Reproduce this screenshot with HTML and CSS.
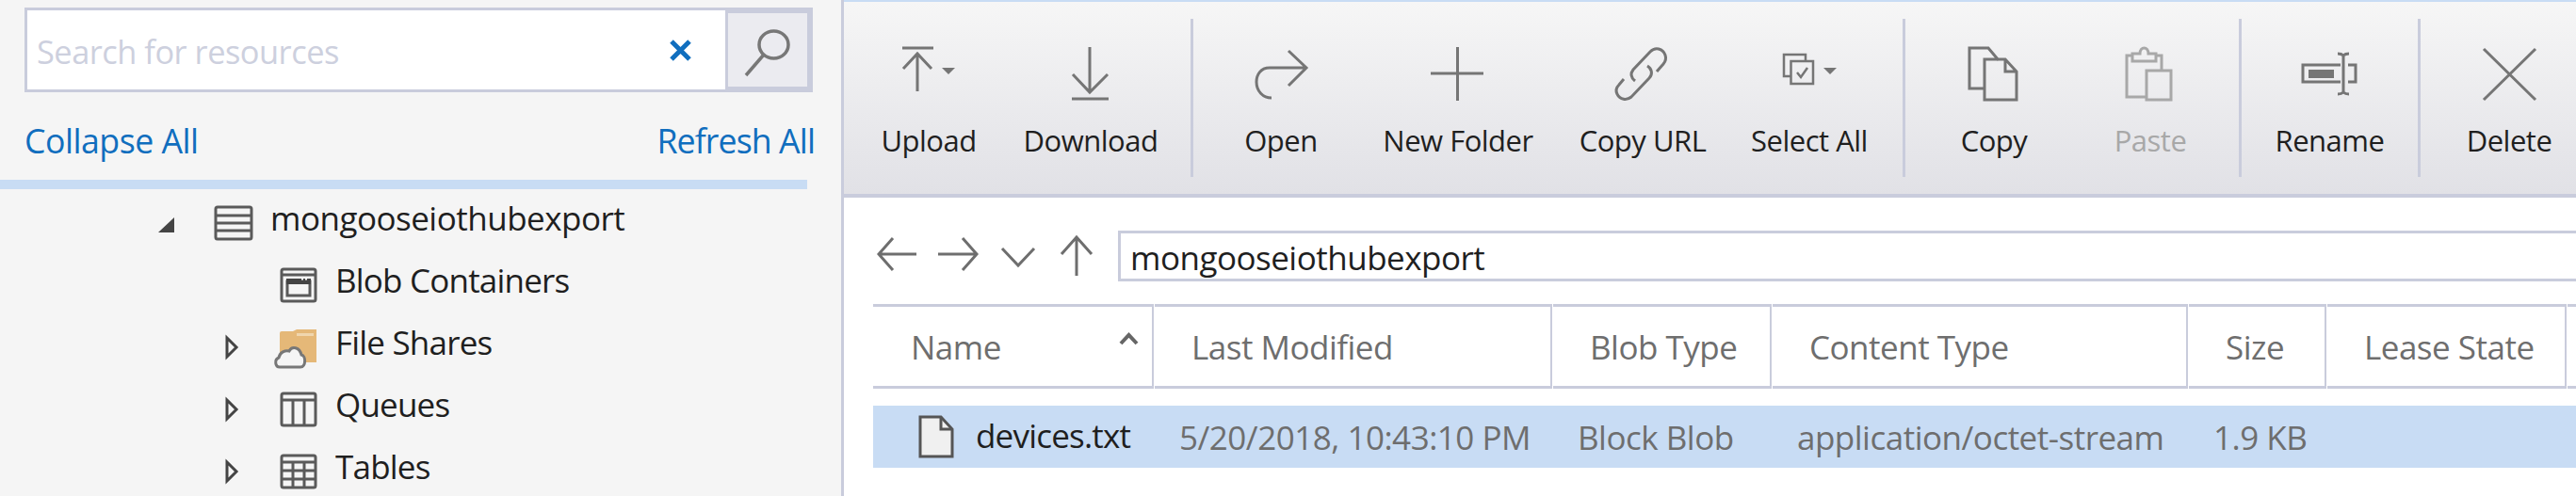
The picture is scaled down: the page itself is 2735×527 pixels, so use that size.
FILE: index.html
```html
<!DOCTYPE html>
<html lang="en">
<head>
    <meta charset="UTF-8">
    <title>Storage Explorer</title>
    <link rel="stylesheet" href="styles.css">
</head>
<body>
<div class="app">
    <div class="sidePanel">
        <div class="searchBox">
            <div class="searchInput">
                <span class="searchPlaceholder">Search for resources</span>
                <svg class="searchClear" width="25" height="23" viewBox="0 0 25 23"><path d="M3 2 22 21M22 2 3 21"/></svg>
            </div>
            <div class="searchButton">
                <svg class="searchGlass" width="84" height="78" viewBox="0 0 84 78"><ellipse cx="48.5" cy="33.5" rx="15.5" ry="14.5"/><path d="M38 44 19 66"/></svg>
            </div>
        </div>
        <div class="linkRow">
            <span>Collapse All</span>
            <span class="linkRefresh">Refresh All</span>
        </div>
        <div class="treeBar"></div>
        <div class="treeRow">
            <svg class="caretSlot" width="59" height="18" viewBox="0 0 59 18"><path class="caretOpen" d="M17 1V17H0Z"/></svg>
            <svg class="treeIcon" width="42" height="38" viewBox="0 0 42 38"><rect class="iconDark" x="2" y="2" width="38" height="34" rx="2"/><path class="iconDark" d="M2 11H40M2 19H40M2 27H40"/></svg>
            <span class="treeLabel">mongooseiothubexport</span>
        </div>
        <div class="treeRow treeChild">
            <span class="caretSlotChild"></span>
            <svg class="treeIcon" width="42" height="38" viewBox="0 0 42 38"><rect class="iconDark" x="2" y="2" width="36" height="34" rx="2"/><path class="iconDark" d="M2 8H38"/><rect class="iconDark" x="8" y="15" width="24" height="15"/><path class="iconFill" d="M7 12H23V14H25V12H27V14H29V12H33V18H7Z"/></svg>
            <span class="treeLabel">Blob Containers</span>
        </div>
        <div class="treeRow treeChild">
            <svg class="caretSlotChild" width="58" height="24" viewBox="0 0 58 24"><path class="caretClosed" d="M2 2 12 12 2 22Z"/></svg>
            <svg class="treeIcon" width="42" height="38" viewBox="0 0 42 38"><path class="folderBack" d="M0 4 Q0 2 2 2H14L18 0H39V35H0Z"/><path class="folderTab" d="M18 4H36V7H18Z"/><path class="cloud" d="M0 40C-5 40 -6 32 -1 30C0 24 6 22 10 23C13 17 21 19 23 27C28 28 28 40 22 40Z"/></svg>
            <span class="treeLabel">File Shares</span>
        </div>
        <div class="treeRow treeChild">
            <svg class="caretSlotChild" width="58" height="24" viewBox="0 0 58 24"><path class="caretClosed" d="M2 2 12 12 2 22Z"/></svg>
            <svg class="treeIcon" width="42" height="38" viewBox="0 0 42 38"><rect class="iconDark" x="2" y="2" width="36" height="34" rx="2"/><path class="iconDark" d="M2 9H38M14 9V36M26 9V36"/></svg>
            <span class="treeLabel">Queues</span>
        </div>
        <div class="treeRow treeChild">
            <svg class="caretSlotChild" width="58" height="24" viewBox="0 0 58 24"><path class="caretClosed" d="M2 2 12 12 2 22Z"/></svg>
            <svg class="treeIcon" width="42" height="38" viewBox="0 0 42 38"><rect class="iconDark" x="2" y="2" width="36" height="34" rx="2"/><path class="iconDark" d="M2 9H38M2 18H38M2 27H38M14 9V36M26 9V36"/></svg>
            <span class="treeLabel">Tables</span>
        </div>
    </div>

    <div class="mainPanel">
        <div class="toolbar">
            <div class="toolItem">
                <svg class="toolIcon" width="64" height="60" viewBox="0 0 64 60"><path d="M4 2H37M20 48V9M5 24 20 8 35 24"/><path class="toolSolid" d="M46 23H60L53 30Z"/></svg>
                <span class="toolLabel">Upload</span>
            </div>
            <div class="toolItem">
                <svg class="toolIcon" width="64" height="60" viewBox="0 0 64 60"><path d="M31 1V49M13 30 31 49 50 30M12 56H51"/></svg>
                <span class="toolLabel">Download</span>
            </div>
            <div class="toolSep"></div>
            <div class="toolItem">
                <svg class="toolIcon" width="64" height="60" viewBox="0 0 64 60"><path d="M40 5 59 23 40 42M59 23H20C10 23 6 31 6 38C6 48 13 55 22 55"/></svg>
                <span class="toolLabel">Open</span>
            </div>
            <div class="toolItem">
                <svg class="toolIcon" width="64" height="60" viewBox="0 0 64 60"><path d="M3 29H59M31.5 1V58"/></svg>
                <span class="toolLabel">New Folder</span>
            </div>
            <div class="toolItem">
                <svg class="toolIcon" width="64" height="60" viewBox="0 0 64 60"><path d="M47 27 54 19C59 13 56 5 49 3C45 2 42 4 40 6L22 25C19 29 19 33 24 37M37 21C42 24 43 30 39 34L20 54C15 58 8 57 5 51C3 47 5 43 7 41L12 35"/></svg>
                <span class="toolLabel">Copy URL</span>
            </div>
            <div class="toolItem">
                <svg class="toolIcon" width="64" height="60" viewBox="0 0 64 60"><path class="thin" d="M12 32H5V9H28V16M12.5 16H36V40H12.5ZM19 28 23 33 30 23"/><path class="toolSolid" d="M47 23H61L54 30Z"/></svg>
                <span class="toolLabel">Select All</span>
            </div>
            <div class="toolSep"></div>
            <div class="toolItem">
                <svg class="toolIcon" width="64" height="60" viewBox="0 0 64 60"><path d="M22 45H6V2H26L37 15M22 14H44L56 27V57H22ZM44 14V27H56"/></svg>
                <span class="toolLabel">Copy</span>
            </div>
            <div class="toolItem toolDisabled">
                <svg class="toolIcon" width="64" height="60" viewBox="0 0 64 60"><path d="M28 54H7V10H13M38 10H44V26M13 16H38V8H30C30 0 21 0 21 8H13ZM28 26H54V57H28Z"/></svg>
                <span class="toolLabel">Paste</span>
            </div>
            <div class="toolSep"></div>
            <div class="toolItem">
                <svg class="toolIcon" width="64" height="60" viewBox="0 0 64 60"><path d="M43 20H3V38H43M46 10V49M40 8C43 8 45 9 46 10C47 9 49 8 52 8M40 51C43 51 45 50 46 49C47 50 49 51 52 51M51 20H59V38H51"/><path class="toolSolid" d="M9 25H36V34H9Z"/></svg>
                <span class="toolLabel">Rename</span>
            </div>
            <div class="toolSep"></div>
            <div class="toolItem">
                <svg class="toolIcon" width="64" height="60" viewBox="0 0 64 60"><path d="M5 3 60 57M60 3 5 57"/></svg>
                <span class="toolLabel">Delete</span>
            </div>
        </div>

        <div class="addressRow">
            <svg class="navIcon" width="50" height="54" viewBox="0 0 50 54"><path d="M46 25H6M21 8 6 25 21 42"/></svg>
            <svg class="navIcon" width="50" height="54" viewBox="0 0 50 54"><path d="M5 25H46M31 8 46 25 31 42"/></svg>
            <svg class="navIcon" width="50" height="54" viewBox="0 0 50 54"><path d="M9 19 26 37 43 19"/></svg>
            <svg class="navIcon" width="50" height="54" viewBox="0 0 50 54"><path d="M24 48V7M8 25 24 7 40 25"/></svg>
            <div class="addressBox">mongooseiothubexport</div>
        </div>

        <div class="tableHead">
            <div class="headCell headName">
                <span>Name</span>
                <svg class="sortIcon" width="23" height="14" viewBox="0 0 23 14"><path d="M3 12 11.5 3 20 12"/></svg>
            </div>
            <div class="headCell">Last Modified</div>
            <div class="headCell">Blob Type</div>
            <div class="headCell">Content Type</div>
            <div class="headCell">Size</div>
            <div class="headCell">Lease State</div>
            <div class="headCell"></div>
        </div>
        <div class="tableRow">
            <div class="rowName">
                <svg class="fileIcon" width="38" height="46" viewBox="0 0 38 46"><path class="fileBody" d="M2 2H24L36 15V44H2Z"/><path class="fileFold" d="M24 2V15H36"/></svg>
                <span>devices.txt</span>
            </div>
            <div class="rowCell">5/20/2018, 10:43:10 PM</div>
            <div class="rowCell">Block Blob</div>
            <div class="rowCell">application/octet-stream</div>
            <div class="rowCell">1.9 KB</div>
            <div class="rowCell"></div>
            <div class="rowCell"></div>
        </div>
    </div>
</div>
</body>
</html>
```

FILE: styles.css
```css
*{
    box-sizing: border-box;
}
html, body{
    margin: 0;
    height: 100%;
    overflow: hidden;
}
body{
    background: #ffffff;
    font-family: "Open Sans", "Noto Sans", sans-serif;
    font-size: 35px;
    letter-spacing: -0.5px;
    color: #1f1f1f;
}
svg{
    display: block;
    flex: none;
    overflow: visible;
}
.app{
    display: flex;
    height: 527px;
}

/* left panel */
.sidePanel{
    width: 893px;
    flex: none;
    background: #f5f5f5;
    padding-top: 8px;
}
.searchBox{
    display: flex;
    width: 837px;
    height: 90px;
    margin-left: 26px;
    border: 3px solid #c9ccdc;
    background: #c9ccdc;
}
.searchInput{
    width: 741px;
    display: flex;
    align-items: center;
    justify-content: space-between;
    background: #ffffff;
    padding: 0 35px 0 10px;
}
.searchPlaceholder{
    margin-top: 3px;
    font-size: 34.4px;
    color: #cdd0de;
}
.searchClear path{
    fill: none;
    stroke: #106ebe;
    stroke-width: 5;
}
.searchButton{
    width: 84px;
    margin: 3px 0 3px 3px;
    background: #ebebf0;
}
.searchGlass ellipse, .searchGlass path{
    fill: none;
    stroke: #777777;
    stroke-width: 3.5;
}
.linkRow{
    display: flex;
    justify-content: space-between;
    width: 839px;
    margin-left: 26px;
    margin-top: 29px;
    font-size: 35.7px;
    line-height: 44px;
    color: #106ebe;
}
.linkRefresh{
    letter-spacing: -0.9px;
}
.treeBar{
    width: 857px;
    height: 10px;
    margin-top: 20px;
    margin-bottom: 3px;
    background: #c8dcf4;
}
.treeRow{
    display: flex;
    align-items: center;
    height: 66px;
    padding-left: 168px;
}
.treeChild{
    padding-left: 239px;
    letter-spacing: -0.8px;
}
.caretSlot{
    margin-top: 3px;
}
.caretSlotChild{
    width: 58px;
    flex: none;
}
.caretOpen{
    fill: #444444;
}
.caretClosed{
    fill: none;
    stroke: #444444;
    stroke-width: 3;
}
.treeIcon{
    margin-right: 18px;
}
.treeChild .treeIcon{
    margin-right: 17px;
}
.iconDark{
    fill: none;
    stroke: #5a5a5a;
    stroke-width: 3;
}
.iconFill{
    fill: #444444;
}
.folderBack{
    fill: #e5b878;
}
.folderTab{
    fill: #f0d6ae;
}
.cloud{
    fill: #f5f5f5;
    stroke: #777777;
    stroke-width: 3;
}
.treeLabel{
    line-height: 44px;
    margin-bottom: 10px;
}

/* toolbar */
.mainPanel{
    flex: 1;
    min-width: 0;
    border-left: 3px solid #c9ccdc;
    padding-top: 2px;
    background: linear-gradient(#c8dcf4 2px, #ffffff 2px);
    background-repeat: no-repeat;
}
.toolbar{
    display: grid;
    grid-template-columns: 172px 172px 23px 186px 190px 202px 152px 26px 188px 144px 25px 187px 3px 188px;
    height: 208px;
    padding-left: 4px;
    border-bottom: 4px solid #c9ccdc;
    background: linear-gradient(#f6f6f6, #e1e1e6);
}
.toolItem{
    display: flex;
    flex-direction: column;
    align-items: center;
    padding-top: 47px;
}
.toolSep{
    width: 3px;
    height: 168px;
    justify-self: end;
    margin-top: 18px;
    background: #c9ccdc;
}
.toolIcon path{
    fill: none;
    stroke: #757575;
    stroke-width: 3;
}
.toolIcon .thin{
    stroke-width: 2.5;
}
.toolIcon .toolSolid{
    fill: #757575;
    stroke: none;
}
.toolLabel{
    font-size: 31px;
    line-height: 44px;
    margin-top: 18px;
}
.toolDisabled .toolIcon path{
    stroke: #a8a8a8;
}
.toolDisabled .toolLabel{
    color: #a8a8a8;
}

/* address bar */
.addressRow{
    display: flex;
    gap: 14px;
    margin-top: 35px;
    padding-left: 31px;
}
.navIcon path{
    fill: none;
    stroke: #6e6e6e;
    stroke-width: 3;
}
.addressBox{
    flex: 1;
    height: 54px;
    margin-left: 4px;
    padding-left: 10px;
    border: 3px solid #c9ccdc;
    border-right: 0;
    line-height: 51px;
}

/* file table */
.tableHead, .tableRow{
    display: grid;
    grid-template-columns: 298px 422px 232px 441px 146px 254px 40px;
    column-gap: 1px;
    margin-left: 31px;
}
.tableHead{
    height: 90px;
    margin-top: 24px;
}
.headCell{
    display: flex;
    align-items: center;
    padding-left: 39px;
    border-top: 3px solid #c9ccdc;
    border-bottom: 3px solid #c9ccdc;
    border-right: 2px solid #c9ccdc;
    color: #6e6e6e;
}
.headName{
    justify-content: space-between;
    padding-left: 40px;
    padding-right: 13px;
}
.sortIcon{
    margin-bottom: 16px;
}
.sortIcon path{
    fill: none;
    stroke: #666666;
    stroke-width: 4;
}
.tableRow{
    height: 66px;
    margin-top: 18px;
    background: #c8dcf4;
}
.rowName{
    display: flex;
    align-items: center;
    padding-left: 48px;
    padding-bottom: 4px;
}
.rowName span{
    margin-left: 23px;
    letter-spacing: -0.8px;
}
.fileIcon{
    margin-top: 4px;
}
.fileBody{
    fill: #f0f0f0;
    stroke: #555555;
    stroke-width: 3;
}
.fileFold{
    fill: none;
    stroke: #555555;
    stroke-width: 3;
}
.rowCell{
    display: flex;
    align-items: center;
    padding-left: 26px;
    color: #6e6e6e;
}
```
